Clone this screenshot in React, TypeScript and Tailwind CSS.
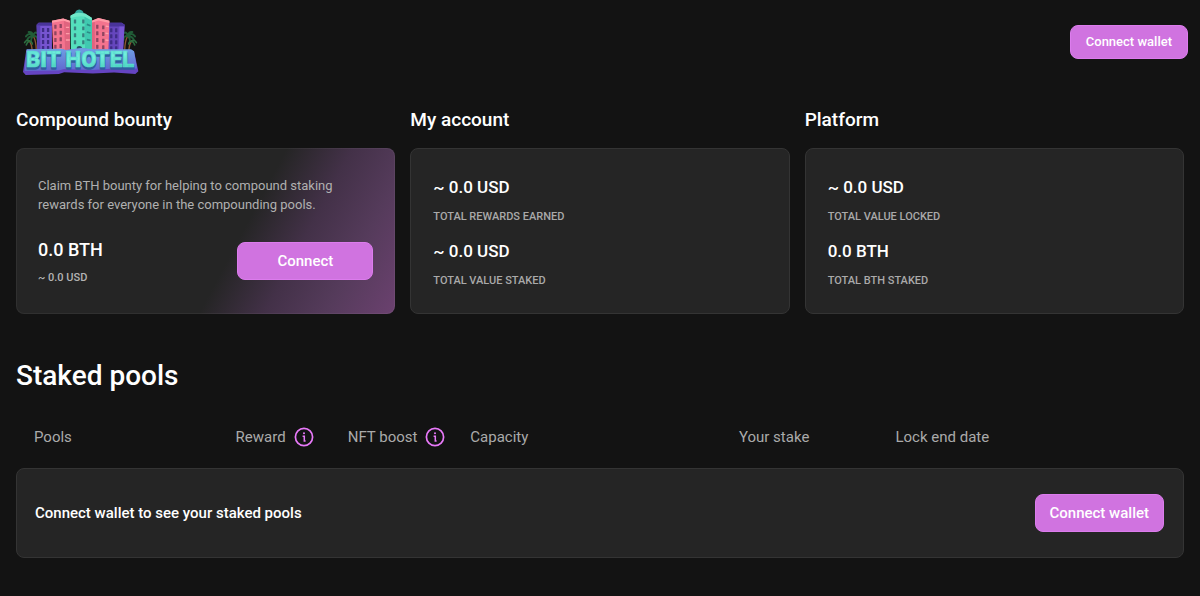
import type { ButtonHTMLAttributes } from 'react';
import clsx from 'clsx';

type Stat = { value: string; label: string };

const accountStats: Stat[] = [
  { value: '~ 0.0 USD', label: 'Total rewards earned' },
  { value: '~ 0.0 USD', label: 'Total value staked' },
];

const platformStats: Stat[] = [
  { value: '~ 0.0 USD', label: 'Total value locked' },
  { value: '0.0 BTH', label: 'Total BTH staked' },
];

const columns = [
  { title: 'Pools', info: false, className: 'w-[18.8%] pl-[18px]' },
  { title: 'Reward', info: true, className: 'w-[9.6%]' },
  { title: 'NFT boost', info: true, className: 'w-[10.5%]' },
  { title: 'Capacity', info: false, className: 'w-[23%]' },
  { title: 'Your stake', info: false, className: 'w-[13.4%]' },
  { title: 'Lock end date', info: false, className: '' },
];

function Windows({ x, y, cols, rows, dx, dy, slope = 0, fill }: {
  x: number; y: number; cols: number; rows: number; dx: number; dy: number; slope?: number; fill: string;
}) {
  return (
    <g fill={fill}>
      {Array.from({ length: cols * rows }, (_, i) => {
        const c = i % cols;
        const r = Math.floor(i / cols);
        return <rect key={i} x={x + c * dx} y={y + r * dy + c * slope} width="7" height="12" rx="1" />;
      })}
    </g>
  );
}

function Palm({ flip }: { flip?: boolean }) {
  return (
    <g transform={flip ? 'translate(420 0) scale(-1 1)' : undefined} fill="none" strokeLinecap="round">
      <path d="M68 110 Q77 126 77 154 M56 124 Q64 136 65 154" stroke="#8a5733" strokeWidth="4" />
      <path d="M68 109 Q56 98 46 111 M68 109 Q54 110 49 123 M68 109 Q64 96 54 98 M68 109 Q72 96 79 101 M68 109 Q82 110 81 122 M68 109 Q60 118 61 126" stroke="#215c37" strokeWidth="6" />
      <path d="M56 125 Q47 120 42 130 M56 125 Q48 130 47 137 M56 125 Q64 126 65 134" stroke="#2d7040" strokeWidth="5" />
    </g>
  );
}

function Logo() {
  return (
    <svg viewBox="34 26 352 204" className="h-[68px] w-[117px]" role="img" aria-label="Bit Hotel">
      <defs>
        <linearGradient id="plate" x1="0" y1="0" x2="0" y2="1">
          <stop offset="0" stopColor="#6fa0e4" />
          <stop offset="1" stopColor="#6068cf" />
        </linearGradient>
        <linearGradient id="letters" x1="0" y1="0" x2="0.25" y2="1">
          <stop offset="0" stopColor="#4fd6d2" />
          <stop offset="0.5" stopColor="#74efdc" />
          <stop offset="1" stopColor="#44cfb9" />
        </linearGradient>
      </defs>

      <Palm />
      <Palm flip />

      {/* purple blocks */}
      <path d="M78 76 L84 70 H124 V156 H80 Z" fill="#7654d0" />
      <path d="M78 76 L84 70 H124 V79 H78 Z" fill="#49349a" />
      <path d="M78 79 H89 V156 H81 Z" fill="#5a41b4" />
      <Windows x={94} y={86} cols={2} rows={4} dx={15} dy={18} fill="#3f2c86" />
      <path d="M292 70 H334 L343 76 L338 156 H292 Z" fill="#6546bd" />
      <path d="M292 70 H334 L343 76 V81 H292 Z" fill="#49349a" />
      <path d="M327 81 H342 L338 156 H325 Z" fill="#7957d4" />
      <Windows x={299} y={87} cols={2} rows={4} dx={15} dy={18} fill="#3f2c86" />

      {/* pink blocks */}
      <path d="M124 64 L158 57 L178 64 V156 H128 Z" fill="#f4738e" />
      <path d="M124 64 L158 57 L178 64 V70 L158 64 L125 70 Z" fill="#ff9ba7" />
      <path d="M160 65 L178 71 V156 H164 Z" fill="#e0647f" />
      <Windows x={131} y={76} cols={2} rows={4} dx={16} dy={20} slope={-2} fill="#8f4560" />
      <path d="M166 84 H176 M166 103 H177 M166 122 H178" stroke="#ff9ba7" strokeWidth="4" />
      <path d="M244 64 L264 56 L297 64 L294 156 H244 Z" fill="#f4738e" />
      <path d="M244 64 L264 56 L297 64 V71 L264 63 L244 70 Z" fill="#ff9ba7" />
      <path d="M244 70 L253 68 V156 H244 Z" fill="#e0647f" />
      <Windows x={257} y={76} cols={2} rows={4} dx={18} dy={20} slope={2} fill="#8f4560" />
      <path d="M286 80 L295 82 M285 101 L294 103 M285 122 L294 123" stroke="#ffa3ae" strokeWidth="4" />

      {/* teal tower */}
      <path d="M193 43 Q195 31 206 30 Q218 31 220 43 Z" fill="#33aaa0" />
      <path d="M180 50 Q193 40 206 41 L224 43 L244 56 V156 H181 Z" fill="#54dfbd" />
      <path d="M180 48 Q193 39 206 40 L224 42 L244 55 V63 L221 51 Q205 48 180 56 Z" fill="#6fe8c9" />
      <path d="M222 52 L244 64 V156 H224 Z" fill="#40c9b0" />
      <Windows x={190} y={60} cols={2} rows={4} dx={25} dy={21} fill="#397f80" />
      <path d="M229 75 L240 79 M229 98 L240 101 M229 121 L240 123" stroke="#2b8c86" strokeWidth="5" />
      <path d="M199 156 V143 Q206 137 214 143 V156 Z" fill="#27556a" />

      {/* sign */}
      <path d="M47 151 L153 149 L165 153 L211 147 L253 151 L361 152 L371 156 L384 216 L375 224 L311 220 L247 223 L161 219 L145 224 L45 227 L37 218 Z" fill="#6544c2" />
      <path d="M48 150 L153 148 L166 152 L212 146 L253 150 L362 150 L371 156 L380 208 L311 208 L247 212 L160 209 L145 214 L42 215 Z" fill="url(#plate)" />
      <g
        fontFamily="Roboto, sans-serif"
        fontSize="67"
        fontWeight="900"
        strokeLinejoin="round"
      >
        <g fill="#2f5f9f" stroke="#2f5f9f" strokeWidth="5">
          <text x="46" y="208">BIT</text>
          <text x="165" y="208">HOTEL</text>
        </g>
        <g fill="url(#letters)" stroke="#5bdccf" strokeWidth="2">
          <text x="46" y="204">BIT</text>
          <text x="165" y="204">HOTEL</text>
        </g>
      </g>
    </svg>
  );
}

function InfoIcon() {
  return (
    <svg viewBox="0 0 20 20" className="size-5 shrink-0" fill="none" stroke="#e879f9" aria-hidden="true">
      <circle cx="10" cy="10" r="8.6" strokeWidth="1.7" />
      <path d="M8.6 9.3h1.7v4.6h1.3" strokeWidth="1.5" />
      <circle cx="10" cy="6.2" r="1" fill="#e879f9" stroke="none" />
    </svg>
  );
}

function Button({ className, ...props }: ButtonHTMLAttributes<HTMLButtonElement>) {
  return (
    <button
      type="button"
      className={clsx('rounded-lg border border-[#dc7ced] bg-[#d073e0] font-medium text-white hover:bg-[#da80e9]', className)}
      {...props}
    />
  );
}

function StatCard({ title, stats }: { title: string; stats: Stat[] }) {
  return (
    <section className="flex flex-col">
      <h2 className="mb-4 text-[19px] leading-6 font-medium">{title}</h2>
      <dl className="flex flex-1 flex-col gap-3 rounded-lg border border-[#343434] bg-[#252525] px-[22px] py-6">
        {stats.map(stat => (
          <div key={stat.label} className="flex flex-col-reverse gap-2">
            <dt className="text-[11px] leading-4 font-medium text-[#aaaaaa] uppercase">{stat.label}</dt>
            <dd className="text-[17px] leading-7 font-medium">{stat.value}</dd>
          </div>
        ))}
      </dl>
    </section>
  );
}

export default function App() {
  return (
    <div className="min-h-screen bg-[#131313] font-[Roboto,sans-serif] text-white">
      <header className="flex items-center justify-between pt-2 pr-3 pl-[22px]">
        <a href="#">
          <Logo />
        </a>
        <Button className="h-[34px] px-[15px] text-[13px]">Connect wallet</Button>
      </header>

      <main className="px-4 pt-8 pb-9">
        <div className="grid grid-cols-3 gap-[15px]">
          <section className="flex flex-col">
            <h2 className="mb-4 text-[19px] leading-6 font-medium">Compound bounty</h2>
            <div className="flex-1 rounded-lg border border-white/5 bg-[#252525] bg-linear-[118deg,#252525_58%,#433148_72%,#553b5b_85%,#6b416f] bg-origin-border px-[21px] pt-[27px] pb-6">
              <p className="max-w-80 text-[13px] leading-[19px] text-[#b0b0b0]">
                Claim BTH bounty for helping to compound staking rewards for everyone in the compounding pools.
              </p>
              <div className="mt-[22px] flex items-center justify-between">
                <div>
                  <p className="text-lg leading-7 font-medium">0.0 BTH</p>
                  <p className="mt-1.5 text-[11px] leading-4 font-medium text-[#b4b4b4]">~ 0.0 USD</p>
                </div>
                <Button className="h-[38px] w-34 text-[15px]">Connect</Button>
              </div>
            </div>
          </section>
          <StatCard title="My account" stats={accountStats} />
          <StatCard title="Platform" stats={platformStats} />
        </div>

        <h1 className="mt-11 text-[28px] leading-9 font-medium">Staked pools</h1>

        <table className="mt-3 w-full table-fixed border-separate border-spacing-0 text-[15px]">
          <thead>
            <tr>
              {columns.map(col => (
                <th key={col.title} className={clsx('h-[62px] p-0 text-left font-normal text-[#aaaaaa]', col.className)}>
                  <span className="flex items-center gap-2 whitespace-nowrap">
                    {col.title}
                    {col.info && <InfoIcon />}
                  </span>
                </th>
              ))}
            </tr>
          </thead>
          <tbody>
            <tr>
              <td colSpan={6} className="rounded-lg border border-[#343434] bg-[#252525] py-[25px] pr-[19px] pl-[18px]">
                <div className="flex items-center justify-between">
                  <span className="font-medium">Connect wallet to see your staked pools</span>
                  <Button className="h-[38px] px-3.5">Connect wallet</Button>
                </div>
              </td>
            </tr>
          </tbody>
        </table>
      </main>
    </div>
  );
}
